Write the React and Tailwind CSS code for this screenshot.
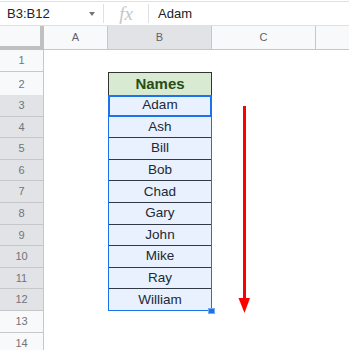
const names = ['Adam', 'Ash', 'Bill', 'Bob', 'Chad', 'Gary', 'John', 'Mike', 'Ray', 'William'];

const rowHeight = (n) => (n === 1 ? 'h-[22px]' : n === 2 ? 'h-[23px]' : 'h-[21.6px]');

export default function App() {
  const rows = Array.from({ length: 14 }, (_, i) => i + 1);

  return (
    <div className="w-[349px] h-[350px] overflow-hidden bg-white font-['Liberation_Sans',Arial,sans-serif] text-[#202124]">
      {/* Formula bar */}
      <div className="mt-[1px] h-[25px] border-t border-b border-[#e0e0e0] flex items-center">
        <div className="w-[103px] flex items-center pl-[7px] pr-[8px] text-[13px]">
          <span className="flex-1">B3:B12</span>
          <span className="w-0 h-0 border-x-[3.5px] border-x-transparent border-t-[4px] border-t-[#757575]"></span>
        </div>
        <div className="w-px h-[19px] bg-[#e0e0e0]"></div>
        <div className="w-[44px] text-center text-[#c6c6c6] italic text-[19px] leading-none font-['Liberation_Serif',serif]">fx</div>
        <div className="w-px h-[19px] bg-[#e0e0e0]"></div>
        <div className="pl-[9px] text-[13px]">Adam</div>
      </div>

      {/* Column headers */}
      <div className="grid grid-cols-[44px_64px_104px_104px_1fr] h-[24px] text-[11px] text-[#5f6368]">
        <div className="bg-[#f8f9fa] border-r-[4px] border-b-[4px] border-[#c0c0c0]"></div>
        <div className="bg-[#f8f9fa] border-r border-b border-[#c7c7c7] flex items-center justify-center">A</div>
        <div className="bg-[#e1e3e6] border-r border-b border-[#c7c7c7] flex items-center justify-center">B</div>
        <div className="bg-[#f8f9fa] border-r border-b border-[#c7c7c7] flex items-center justify-center">C</div>
        <div className="bg-[#f8f9fa] border-b border-[#c7c7c7]"></div>
      </div>

      {/* Rows */}
      <div className="relative">
        {rows.map((n) => {
          const inTable = n >= 2 && n <= 12;
          const selected = n >= 3 && n <= 12;
          return (
            <div key={n} className={`grid grid-cols-[44px_64px_104px_104px_1fr] ${rowHeight(n)}`}>
              <div
                className={`border-r border-b border-[#c7c7c7] flex items-center justify-center text-[11px] text-[#70757a] ${
                  selected ? 'bg-[#e1e3e6]' : 'bg-[#f8f9fa]'
                }`}
              >
                {n}
              </div>
              <div></div>
              {n === 2 ? (
                <div className="border border-[#333] bg-[#d9ead3] flex items-center justify-center text-[15px] font-bold text-[#274e13]">
                  Names
                </div>
              ) : inTable ? (
                <div className="border-x border-b border-[#333] flex items-center justify-center text-[13.5px]">
                  {names[n - 3]}
                </div>
              ) : (
                <div></div>
              )}
              <div></div>
              <div></div>
            </div>
          );
        })}

        {/* Selection B3:B12 */}
        <div className="absolute left-[108px] top-[45px] w-[104px] h-[216px] border border-[#1a73e8] bg-[#1a73e8]/10 pointer-events-none"></div>
        {/* Active cell */}
        <div className="absolute left-[108px] top-[45px] w-[104px] h-[22px] border-2 border-[#1a73e8] pointer-events-none"></div>
        {/* Fill handle */}
        <div className="absolute left-[208px] top-[258px] w-[7px] h-[6px] bg-[#1a73e8] border border-white/40"></div>

        {/* Red arrow */}
        <svg className="absolute left-[237px] top-[55px]" width="14" height="210" viewBox="0 0 14 210">
          <rect x="6" y="1" width="3" height="194" fill="#ff0000" />
          <polygon points="1.5,193 13,193 7.5,208" fill="#ff0000" />
        </svg>
      </div>
    </div>
  );
}
